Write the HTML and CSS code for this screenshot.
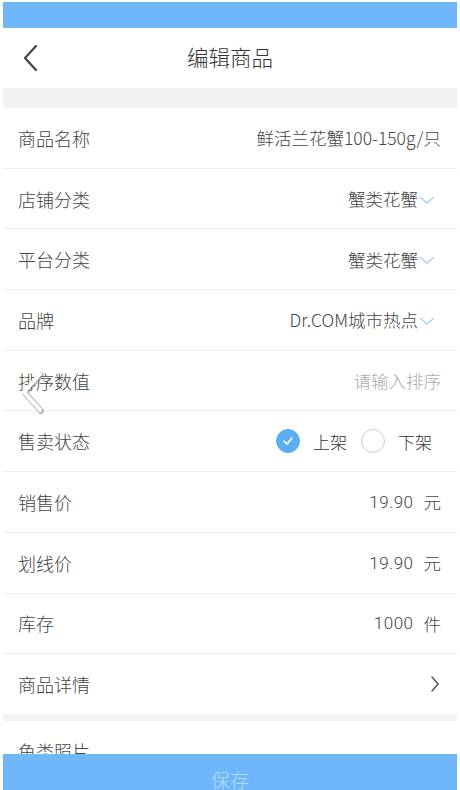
FILE: index.html
```html
<!DOCTYPE html>
<html lang="zh-CN">
<head>
  <meta charset="UTF-8">
  <meta name="viewport" content="width=device-width, initial-scale=1.0">
  <title>编辑商品</title>
  <link rel="stylesheet" href="styles.css">
</head>
<body>
  <div class="page">
    <div class="status-bar"></div>
    <div class="header">
      <svg class="back" width="16" height="28" viewBox="0 0 16 28">
        <path d="M14 2 L3 14 L14 26" fill="none" stroke="#444" stroke-width="2.2" stroke-linecap="round" stroke-linejoin="round"/>
      </svg>
      <div class="title">编辑商品</div>
    </div>
    <div class="gap"></div>

    <div class="list">
      <div class="row">
        <span class="label">商品名称</span>
        <span class="value">鲜活兰花蟹100-150g/只</span>
      </div>
      <div class="row">
        <span class="label">店铺分类</span>
        <span class="value">蟹类花蟹<svg class="down" width="16" height="10" viewBox="0 0 16 10"><path d="M1 2 L8 8 L15 2" fill="none" stroke="#a9d3ea" stroke-width="1.4"/></svg></span>
      </div>
      <div class="row">
        <span class="label">平台分类</span>
        <span class="value">蟹类花蟹<svg class="down" width="16" height="10" viewBox="0 0 16 10"><path d="M1 2 L8 8 L15 2" fill="none" stroke="#a9d3ea" stroke-width="1.4"/></svg></span>
      </div>
      <div class="row">
        <span class="label">品牌</span>
        <span class="value">Dr.COM城市热点<svg class="down" width="16" height="10" viewBox="0 0 16 10"><path d="M1 2 L8 8 L15 2" fill="none" stroke="#a9d3ea" stroke-width="1.4"/></svg></span>
      </div>
      <div class="row">
        <span class="label">排序数值</span>
        <span class="value placeholder">请输入排序</span>
      </div>
      <div class="row">
        <span class="label">售卖状态</span>
        <span class="radios">
          <span class="radio checked">
            <svg width="12" height="10" viewBox="0 0 12 10"><path d="M2 5 L5 8 L10 2" fill="none" stroke="#fff" stroke-width="1.6" stroke-linecap="round" stroke-linejoin="round"/></svg>
          </span>
          <span class="radio-text">上架</span>
          <span class="radio"></span>
          <span class="radio-text">下架</span>
        </span>
      </div>
      <div class="row">
        <span class="label">销售价</span>
        <span class="value"><span class="num">19.90</span>元</span>
      </div>
      <div class="row">
        <span class="label">划线价</span>
        <span class="value"><span class="num">19.90</span>元</span>
      </div>
      <div class="row">
        <span class="label">库存</span>
        <span class="value"><span class="num">1000</span>件</span>
      </div>
      <div class="row last">
        <span class="label">商品详情</span>
        <svg class="more" width="10" height="18" viewBox="0 0 10 18"><path d="M2 2 L8 9 L2 16" fill="none" stroke="#555" stroke-width="1.5" stroke-linecap="round" stroke-linejoin="round"/></svg>
      </div>
    </div>
    <div class="gap small"></div>
    <div class="row">
      <span class="label">鱼类照片</span>
    </div>
  </div>

  <!-- floating back handle -->
  <svg class="float-back" width="34" height="48" viewBox="0 0 34 48">
    <path d="M25 7 L9 25 L25 43" fill="none" stroke="#777" stroke-width="6" stroke-linecap="round" stroke-linejoin="round" opacity="0.5"/>
    <path d="M24 6 L8 24 L24 42" fill="none" stroke="#fff" stroke-width="4" stroke-linecap="round" stroke-linejoin="round"/>
  </svg>

  <div class="save">保存</div>
</body>
</html>
```

FILE: styles.css
```css
body {
  margin: 0;
  overflow: hidden;
  height: 100vh;
  background-color: #fff;
  font-family: "Noto Sans CJK SC", "Noto Sans", sans-serif;
  font-weight: 300;
  color: #444;
}
.page {
  padding: 2px 3px 0;
}
.status-bar {
  height: 26px;
  background: #6fb7fa;
}
.header {
  position: relative;
  height: 60px;
  display: flex;
  align-items: center;
  justify-content: center;
}
.back {
  position: absolute;
  left: 19px;
  top: 16px;
}
.title {
  font-size: 21.5px;
  color: #333;
  margin-top: -3px;
}
.gap {
  height: 20px;
  background: #f2f2f2;
}
.gap.small {
  height: 7px;
}
.row {
  height: 59.7px;
  border-bottom: 1px solid #eee;
  display: flex;
  align-items: center;
  justify-content: space-between;
  padding: 0 16px 0 15px;
}
.row.last {
  border-bottom: none;
}
.label {
  font-size: 18px;
  color: #444;
}
.value {
  font-size: 17.5px;
  color: #444;
  display: flex;
  align-items: center;
}
.value.placeholder {
  color: #aaa;
}
.down {
  margin-left: 1px;
  margin-right: 6px;
  margin-top: 2px;
}
.num {
  font-family: "Roboto", "Noto Sans CJK SC", sans-serif;
  font-size: 17px;
  letter-spacing: 0.5px;
  margin-right: 10px;
}
.more {
  margin-right: 1px;
}
.radios {
  display: flex;
  align-items: center;
  font-size: 17px;
  margin-right: 9px;
}
.radio {
  width: 22px;
  height: 22px;
  border-radius: 50%;
  border: 1px solid #ccc;
  display: flex;
  align-items: center;
  justify-content: center;
}
.radio.checked {
  background: #5dadf3;
  border-color: #5dadf3;
}
.radio-text {
  margin-left: 13px;
  margin-right: 14px;
  color: #333;
}
.radio-text:last-child {
  margin-right: 0;
}
.float-back {
  position: absolute;
  left: 16px;
  top: 368px;
}
.save {
  position: fixed;
  left: 3px;
  right: 3px;
  top: 754px;
  height: 50px;
  background: #6fb7fa;
  color: #b9dcfc;
  font-size: 19px;
  display: flex;
  align-items: center;
  justify-content: center;
}
```
